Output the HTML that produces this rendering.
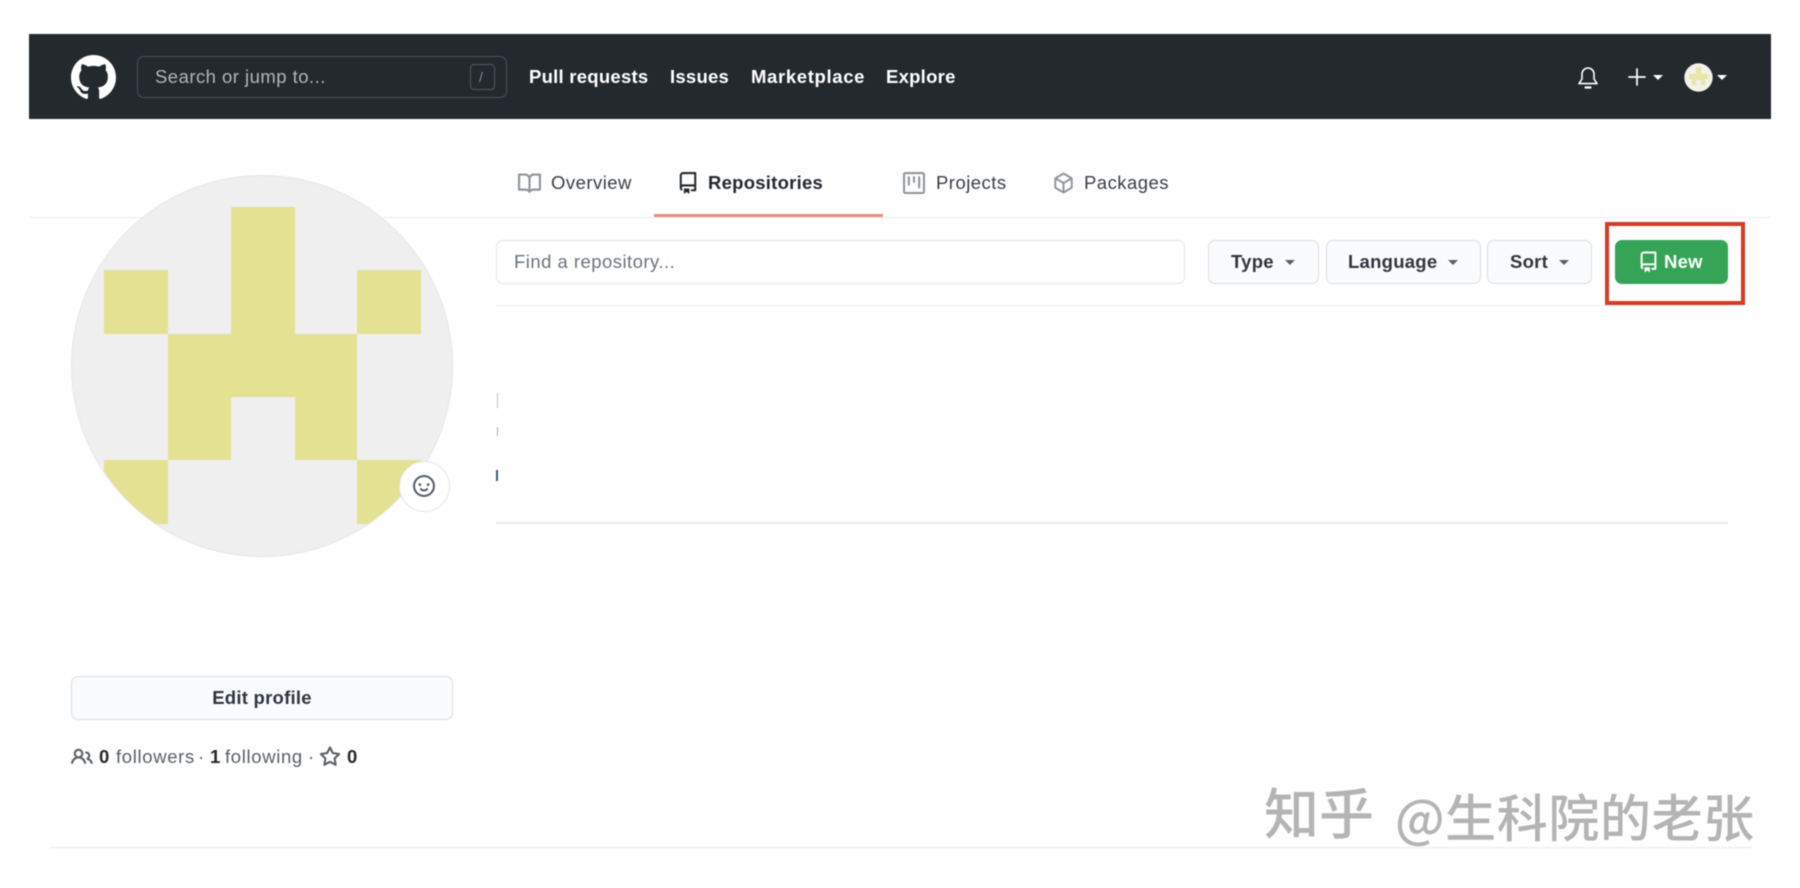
<!DOCTYPE html>
<html lang="zh"><head><meta charset="utf-8"><title>Repositories</title>
<style>
html,body{margin:0;padding:0;width:1800px;height:888px;overflow:hidden;background:#fefefe}
#w{position:absolute;left:0;top:0;width:1800px;height:888px;filter:blur(.5px);font-family:"Liberation Sans",sans-serif;font-size:18.5px;color:#24292e}
.a{position:absolute}
.t{position:absolute;white-space:nowrap;line-height:24px;height:24px;letter-spacing:.47px}
.b{font-weight:700;letter-spacing:.25px}
.g{color:#586069;letter-spacing:.65px}
.btn{position:absolute;box-sizing:border-box;background:#fafbfc;border:1.5px solid #dcdee1;border-radius:7px;height:44px;top:240px}
.c{position:absolute;width:0;height:0;border-left:5px solid transparent;border-right:5px solid transparent;border-top:5px solid #586069}
svg{position:absolute;display:block}
.l{position:absolute;height:1.5px;background:#ebecee}
.y{position:absolute;background:#e3e293}
</style></head><body><div id="w">

<div class="a" style="left:29px;top:33.5px;width:1742px;height:85px;background:#24292e"></div>
<svg style="left:71px;top:55px" width="45" height="45" viewBox="0 0 16 16" fill="#fff"><path fill-rule="evenodd" d="M8 0C3.58 0 0 3.58 0 8c0 3.54 2.29 6.53 5.47 7.59.4.07.55-.17.55-.38 0-.19-.01-.82-.01-1.49-2.01.37-2.53-.49-2.69-.94-.09-.23-.48-.94-.82-1.13-.28-.15-.68-.52-.01-.53.63-.01 1.08.58 1.23.82.72 1.21 1.87.87 2.33.66.07-.52.28-.87.51-1.07-1.78-.2-3.64-.89-3.64-3.95 0-.87.31-1.59.82-2.15-.08-.2-.36-1.02.08-2.12 0 0 .67-.21 2.2.82.64-.18 1.32-.27 2-.27.68 0 1.36.09 2 .27 1.53-1.04 2.2-.82 2.2-.82.44 1.1.16 1.92.08 2.12.51.56.82 1.27.82 2.15 0 3.07-1.87 3.75-3.65 3.95.29.25.54.73.54 1.48 0 1.07-.01 1.93-.01 2.2 0 .21.15.46.55.38A8.013 8.013 0 0016 8c0-4.42-3.58-8-8-8z"/></svg>
<div class="a" style="left:137px;top:56px;width:370px;height:42px;box-sizing:border-box;border:1.5px solid #4b5056;border-radius:7px"></div>
<div class="t" style="left:155px;top:65px;color:#b3b6b9">Search or jump to...</div>
<div class="a" style="left:470px;top:64px;width:25px;height:26px;box-sizing:border-box;border:1.5px solid #53585d;border-radius:4px"></div>
<div class="t" style="left:479px;top:65px;color:#8a8e92;font-size:14px">/</div>
<div class="t b" style="left:529px;top:65px;color:#fff">Pull requests</div>
<div class="t b" style="left:670px;top:65px;color:#fff">Issues</div>
<div class="t b" style="left:751px;top:65px;color:#fff;letter-spacing:.65px">Marketplace</div>
<div class="t b" style="left:886px;top:65px;color:#fff">Explore</div>
<svg style="left:1577px;top:64px" width="22" height="26" viewBox="0 0 22 26" fill="none" stroke="#fff" stroke-width="1.6" stroke-linejoin="round" stroke-linecap="round"><path d="M5 10a6 6 0 0112 0v5l3 4.6H2L5 15z"/><path d="M8.5 23.5h5" stroke-width="2.2"/></svg>
<svg style="left:1628px;top:68px" width="18" height="18" viewBox="0 0 18 18" fill="none" stroke="#fff" stroke-width="1.7" stroke-linecap="round"><path d="M9 1v16M1 9h16"/></svg>
<div class="c" style="left:1653px;top:75px;border-top-color:#fff"></div>
<svg style="left:1684px;top:63px" width="29" height="29" viewBox="0 0 29 29"><circle cx="14.5" cy="14.5" r="14.2" fill="#f1f1e6"/><path d="M12 4h5v7h7v5h-3v6h-4v-5h-5v5H8v-6H5v-5h7z" fill="#e5e49c" opacity=".85"/></svg>
<div class="c" style="left:1717px;top:75px;border-top-color:#fff"></div>

<div class="l" style="left:29px;top:216.5px;width:1742px"></div>
<svg style="left:518px;top:172px" width="23" height="23" viewBox="0 0 16 16" fill="#8f959b"><path fill-rule="evenodd" d="M0 1.75A.75.75 0 01.75 1h4.253c1.227 0 2.317.59 3 1.501A3.744 3.744 0 0111.006 1h4.245a.75.75 0 01.75.75v10.5a.75.75 0 01-.75.75h-4.507a2.25 2.25 0 00-1.591.659l-.622.621a.75.75 0 01-1.06 0l-.622-.621A2.25 2.25 0 005.258 13H.75a.75.75 0 01-.75-.75V1.75zm8.755 3a2.25 2.25 0 012.25-2.25H14.5v9h-3.757c-.71 0-1.4.201-1.992.572l.004-7.322zm-1.504 7.324l.004-5.073-.002-2.253A2.25 2.25 0 005.003 2.5H1.5v9h3.757a3.75 3.75 0 011.994.574z"/></svg>
<div class="t" style="left:551px;top:171px;color:#3a4046">Overview</div>
<svg style="left:677px;top:172px" width="22" height="22" viewBox="0 0 16 16" fill="#24292e"><path fill-rule="evenodd" d="M2 2.5A2.5 2.5 0 014.5 0h8.75a.75.75 0 01.75.75v12.5a.75.75 0 01-.75.75h-2.5a.75.75 0 110-1.5h1.75v-2h-8a1 1 0 00-.714 1.7.75.75 0 01-1.072 1.05A2.495 2.495 0 012 11.5v-9zm10.5-1V9h-8c-.356 0-.694.074-1 .208V2.5a1 1 0 011-1h8zM5 12.25v3.25a.25.25 0 00.4.2l1.45-1.087a.25.25 0 01.3 0L8.6 15.7a.25.25 0 00.4-.2v-3.25a.25.25 0 00-.25-.25h-3.5a.25.25 0 00-.25.25z"/></svg>
<div class="t b" style="left:708px;top:171px">Repositories</div>
<div class="a" style="left:654px;top:214px;width:229px;height:3px;background:#ef8a80"></div>
<svg style="left:903px;top:172px" width="22" height="22" viewBox="0 0 16 16" fill="#8f959b"><path fill-rule="evenodd" d="M1.75 0A1.75 1.75 0 000 1.75v12.5C0 15.216.784 16 1.75 16h12.5A1.75 1.75 0 0016 14.25V1.75A1.75 1.75 0 0014.25 0H1.75zM1.5 1.75a.25.25 0 01.25-.25h12.5a.25.25 0 01.25.25v12.5a.25.25 0 01-.25.25H1.75a.25.25 0 01-.25-.25V1.75zM11.75 3a.75.75 0 00-.75.75v7.5a.75.75 0 001.5 0v-7.5a.75.75 0 00-.75-.75zm-8.25.75a.75.75 0 011.5 0v5.5a.75.75 0 01-1.5 0v-5.5zM8 3a.75.75 0 00-.75.75v3.5a.75.75 0 001.5 0v-3.5A.75.75 0 008 3z"/></svg>
<div class="t" style="left:936px;top:171px;color:#3a4046">Projects</div>
<svg style="left:1053px;top:172px" width="21" height="22" viewBox="0 0 16 16" fill="#8f959b"><path fill-rule="evenodd" d="M8.878.392a1.75 1.75 0 00-1.756 0l-5.25 3.045A1.75 1.75 0 001 4.951v6.098c0 .624.332 1.2.872 1.514l5.25 3.045a1.75 1.75 0 001.756 0l5.25-3.045c.54-.313.872-.89.872-1.514V4.951c0-.624-.332-1.201-.872-1.514L8.878.392zM7.875 1.69a.25.25 0 01.25 0l4.63 2.685L8 7.133 3.245 4.375l4.63-2.685zM2.5 5.677v5.372c0 .09.047.171.125.216l4.625 2.683V8.432L2.5 5.677zm6.25 8.271l4.625-2.683a.25.25 0 00.125-.216V5.677L8.75 8.432v5.516z"/></svg>
<div class="t" style="left:1084px;top:171px;color:#3a4046">Packages</div>

<div class="a" style="left:71px;top:175px;width:382px;height:382px;box-sizing:border-box;border-radius:50%;background:#efefef;border:1.5px solid #e5e6e7;overflow:hidden">
  <div style="position:absolute;left:-72.5px;top:-176.5px;width:600px;height:600px">
    <div class="y" style="left:231px;top:207px;width:64px;height:127px"></div>
    <div class="y" style="left:104px;top:270px;width:64px;height:64px"></div>
    <div class="y" style="left:357px;top:270px;width:64px;height:64px"></div>
    <div class="y" style="left:168px;top:334px;width:189px;height:63px"></div>
    <div class="y" style="left:168px;top:397px;width:63px;height:63px"></div>
    <div class="y" style="left:295px;top:397px;width:62px;height:63px"></div>
    <div class="y" style="left:104px;top:460px;width:64px;height:64px"></div>
    <div class="y" style="left:357px;top:460px;width:64px;height:64px"></div>
  </div>
</div>
<div class="a" style="left:399px;top:461px;width:51px;height:51px;box-sizing:border-box;border-radius:50%;background:#fff;border:1.5px solid #e1e4e8"></div>
<svg style="left:413px;top:475px" width="22" height="22" viewBox="0 0 16 16" fill="#586069"><path fill-rule="evenodd" d="M1.5 8a6.5 6.5 0 1113 0 6.5 6.5 0 01-13 0zM8 0a8 8 0 100 16A8 8 0 008 0zM5 8a1 1 0 100-2 1 1 0 000 2zm7-1a1 1 0 11-2 0 1 1 0 012 0zM5.32 9.636a.75.75 0 011.038.175l.007.009c.103.118.22.222.35.31.264.178.683.37 1.285.37.602 0 1.02-.192 1.285-.371.13-.088.247-.192.35-.31l.007-.008a.75.75 0 111.222.87l-.614-.431c.614.43.614.431.613.431v.001l-.001.002-.002.003-.005.007-.014.019a1.984 1.984 0 01-.184.213c-.16.166-.338.316-.53.445-.63.418-1.37.638-2.127.629-.946 0-1.652-.308-2.126-.63a3.32 3.32 0 01-.715-.657l-.014-.02-.005-.006-.002-.003v-.002h-.001l.613-.432-.614.43a.75.75 0 01.183-1.044h.001z"/></svg>

<div class="a" style="left:496px;top:240px;width:689px;height:44px;box-sizing:border-box;border:1.5px solid #e1e4e8;border-radius:7px;background:#fff"></div>
<div class="t" style="left:514px;top:250px;color:#6a737d">Find a repository...</div>
<div class="btn" style="left:1208px;width:111px"></div>
<div class="t b" style="left:1231px;top:250px;color:#2f363d">Type</div><div class="c" style="left:1285px;top:260px"></div>
<div class="btn" style="left:1326px;width:155px"></div>
<div class="t b" style="left:1348px;top:250px;color:#2f363d">Language</div><div class="c" style="left:1448px;top:260px"></div>
<div class="btn" style="left:1487px;width:105px"></div>
<div class="t b" style="left:1510px;top:250px;color:#2f363d">Sort</div><div class="c" style="left:1559px;top:260px"></div>

<div class="a" style="left:1605px;top:222px;width:140px;height:83px;box-sizing:border-box;border:4.5px solid #d43c26"></div>
<div class="a" style="left:1615px;top:240px;width:113px;height:44px;background:#35a456;border-radius:7px"></div>
<svg style="left:1638px;top:251px" width="21" height="22" viewBox="0 0 16 16" fill="#fff"><path fill-rule="evenodd" d="M2 2.5A2.5 2.5 0 014.5 0h8.75a.75.75 0 01.75.75v12.5a.75.75 0 01-.75.75h-2.5a.75.75 0 110-1.5h1.75v-2h-8a1 1 0 00-.714 1.7.75.75 0 01-1.072 1.05A2.495 2.495 0 012 11.5v-9zm10.5-1V9h-8c-.356 0-.694.074-1 .208V2.5a1 1 0 011-1h8zM5 12.25v3.25a.25.25 0 00.4.2l1.45-1.087a.25.25 0 01.3 0L8.6 15.7a.25.25 0 00.4-.2v-3.25a.25.25 0 00-.25-.25h-3.5a.25.25 0 00-.25.25z"/></svg>
<div class="t b" style="left:1664px;top:250px;color:#fff">New</div>

<div class="l" style="left:496px;top:304.5px;width:1232px"></div>
<div class="a" style="left:496.5px;top:393px;width:1.5px;height:15px;background:#c3c6c9"></div>
<div class="a" style="left:496.5px;top:427px;width:1.5px;height:9px;background:#a8adb2"></div>
<div class="a" style="left:496px;top:470px;width:2px;height:11px;background:#3d5f80"></div>
<div class="l" style="left:496px;top:522px;width:1232px"></div>

<div class="a" style="left:71px;top:676px;width:382px;height:44px;box-sizing:border-box;background:#fafbfc;border:1.5px solid #dcdee1;border-radius:7px"></div>
<div class="t b" style="left:71px;width:382px;text-align:center;top:686px;color:#2f363d">Edit profile</div>

<svg style="left:71px;top:746px" width="22" height="22" viewBox="0 0 16 16" fill="#586069"><path fill-rule="evenodd" d="M5.5 3.5a2 2 0 100 4 2 2 0 000-4zM2 5.5a3.5 3.5 0 115.898 2.549 5.507 5.507 0 013.034 4.084.75.75 0 11-1.482.235 4.001 4.001 0 00-7.9 0 .75.75 0 01-1.482-.236A5.507 5.507 0 013.102 8.05 3.49 3.49 0 012 5.5zM11 4a.75.75 0 100 1.5 1.5 1.5 0 01.666 2.844.75.75 0 00-.416.672v.352a.75.75 0 00.574.73c1.2.289 2.162 1.2 2.522 2.372a.75.75 0 101.434-.44 5.01 5.01 0 00-2.56-3.012A3 3 0 0011 4z"/></svg>
<div class="t b" style="left:99px;top:745px">0</div>
<div class="t g" style="left:116px;top:745px">followers</div>
<div class="t g" style="left:198px;top:745px">·</div>
<div class="t b" style="left:210px;top:745px">1</div>
<div class="t g" style="left:225px;top:745px">following</div>
<div class="t g" style="left:308px;top:745px">·</div>
<svg style="left:319px;top:746px" width="22" height="22" viewBox="0 0 16 16" fill="#586069"><path fill-rule="evenodd" d="M8 .25a.75.75 0 01.673.418l1.882 3.815 4.21.612a.75.75 0 01.416 1.279l-3.046 2.97.719 4.192a.75.75 0 01-1.088.791L8 12.347l-3.766 1.98a.75.75 0 01-1.088-.79l.72-4.194L.818 6.374a.75.75 0 01.416-1.28l4.21-.611L7.327.668A.75.75 0 018 .25zm0 2.445L6.615 5.5a.75.75 0 01-.564.41l-3.097.45 2.24 2.184a.75.75 0 01.216.664l-.528 3.084 2.769-1.456a.75.75 0 01.698 0l2.77 1.456-.53-3.084a.75.75 0 01.216-.664l2.24-2.183-3.096-.45a.75.75 0 01-.564-.41L8 2.694z"/></svg>
<div class="t b" style="left:347px;top:745px">0</div>

<div class="l" style="left:50px;top:846.5px;width:1702px"></div>

<div class="a" style="left:1264px;top:785px;white-space:nowrap;line-height:60px;font-family:'Liberation Sans','Noto Sans CJK SC',sans-serif;font-size:55px;font-weight:500;color:#b4b4b4;text-shadow:1.5px -1.5px 0 #fff">知乎</div>
<div class="a" style="left:1395px;top:785px;white-space:nowrap;line-height:60px;font-family:'Noto Sans CJK SC','Liberation Sans',sans-serif;font-size:51px;font-weight:500;letter-spacing:.6px;color:#b4b4b4;text-shadow:1.5px -1.5px 0 #fff">@生科院的老张</div>
</div></body></html>
